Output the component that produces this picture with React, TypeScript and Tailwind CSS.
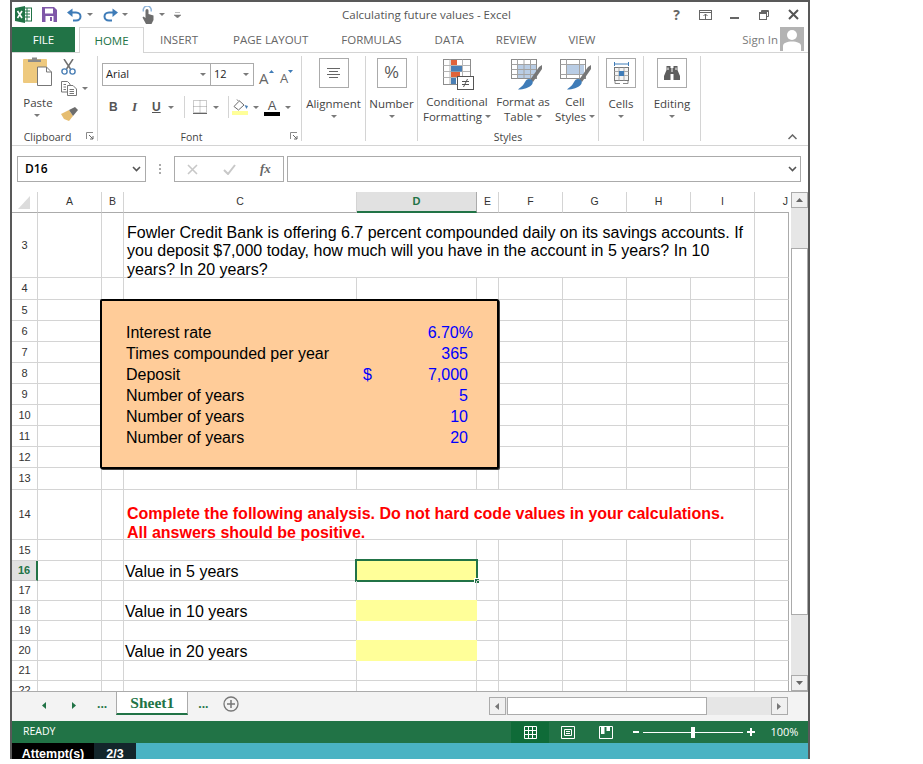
import React from "react";

const ui = "font-['Open_Sans','Noto_Sans',sans-serif]";
const sheet = "font-['Liberation_Sans',Arial,sans-serif]";

function Caret({ className = "" }: { className?: string }) {
  return (
    <svg width="6" height="3" viewBox="0 0 6 3" className={className}>
      <polygon points="0,0 6,0 3,3" fill="#7a7a7a" />
    </svg>
  );
}

function Launcher() {
  return (
    <div className="relative h-0">
      <svg width="8" height="8" viewBox="0 0 8 8" className="absolute right-[3px] -top-[9px]">
        <path d="M0.5 7V0.5H7" fill="none" stroke="#8a8a8a" />
        <path d="M3 3L7 7M7 4V7H4" fill="none" stroke="#666" />
      </svg>
    </div>
  );
}

function GroupLabel({ text, className = "" }: { text?: string; className?: string }) {
  return (
    <div className={`relative mt-auto -mb-[3px] h-[14px] text-center text-[10.5px] leading-[14px] text-[#444] ${ui} ${className}`}>
      {text}
    </div>
  );
}

function ExcelLogo() {
  return (
    <svg width="17" height="17" viewBox="0 0 17 17">
      <rect x="7" y="2" width="9.5" height="13" fill="#fff" stroke="#217346" />
      <path d="M9 5h6M9 8h6M9 11h6M12 2v13" stroke="#217346" />
      <polygon points="0,2 10,0 10,17 0,15" fill="#217346" />
      <path d="M2.5 5L7 12M7 5L2.5 12" stroke="#fff" strokeWidth="1.6" />
    </svg>
  );
}

function SaveIcon() {
  return (
    <svg width="15" height="15" viewBox="0 0 15 15">
      <path d="M0 0H12L15 3V15H0Z" fill="#7f57a8" />
      <rect x="3" y="1.5" width="8" height="5" fill="#fff" />
      <rect x="3.5" y="9" width="8" height="6" fill="#fff" />
      <rect x="8" y="10" width="2" height="4" fill="#7f57a8" />
    </svg>
  );
}

function UndoIcon({ flip }: { flip?: boolean }) {
  return (
    <svg width="15" height="14" viewBox="0 0 15 14" className={flip ? "-scale-x-100" : ""}>
      <path d="M2.5 4.5H9C12 4.5 13.5 6.5 13.5 8.5C13.5 10.5 12 12.5 9 12.5H6" fill="none" stroke="#3f7cb8" strokeWidth="2" />
      <polygon points="5.5,0.5 5.5,9 0,4.5" fill="#3f7cb8" />
    </svg>
  );
}

function TouchIcon() {
  return (
    <svg width="13" height="18" viewBox="0 0 13 18">
      <path d="M1.5 5.5A4 4 0 1 1 9 5.5" fill="none" stroke="#8fb4d9" strokeWidth="1.5" />
      <path d="M3.5 4.5a1.5 1.5 0 0 1 3 0V8l5 1.5V14l-2 4H4L0.5 11.5l1-1L3.5 12Z" fill="#6d6d6d" />
    </svg>
  );
}

function PasteIcon() {
  return (
    <svg width="30" height="30" viewBox="0 0 30 30">
      <rect x="0" y="3" width="24" height="24" rx="1" fill="#eec97e" />
      <path d="M5 6V3.5H9V1.5H14V3.5H18V6Z" fill="#8a8a8a" />
      <path d="M14.5 11H23.5L28.5 16V29.5H14.5Z" fill="#fff" stroke="#777" />
      <path d="M23.5 11V16H28.5" fill="none" stroke="#777" />
    </svg>
  );
}

function ScissorsIcon() {
  return (
    <svg width="15" height="16" viewBox="0 0 15 16">
      <path d="M3 0L9.5 10M12 0L5.5 10" stroke="#6f6f6f" strokeWidth="1.5" />
      <circle cx="3.5" cy="12.5" r="2.6" fill="none" stroke="#4a7fb5" strokeWidth="1.4" />
      <circle cx="11.5" cy="12.5" r="2.6" fill="none" stroke="#4a7fb5" strokeWidth="1.4" />
    </svg>
  );
}

function CopyIcon() {
  return (
    <svg width="16" height="15" viewBox="0 0 16 15">
      <path d="M0.5 0.5H6.5L9 3V11H0.5Z" fill="#fff" stroke="#777" />
      <path d="M6.5 4.5H12L15.5 8V14.5H6.5Z" fill="#fff" stroke="#777" />
      <path d="M8.5 8.5H13M8.5 10.5H13M8.5 12.5H13" stroke="#777" />
      <path d="M2.5 3.5H5M2.5 6H5M2.5 8.5H5" stroke="#777" />
    </svg>
  );
}

function BrushIcon() {
  return (
    <svg width="17" height="14" viewBox="0 0 17 14">
      <polygon points="0,7 8,3 12,9 8,14 3,12" fill="#e6bd70" />
      <polygon points="8,3 14,0 17,3 12,9" fill="#6d6d6d" />
    </svg>
  );
}

function BordersIcon() {
  return (
    <svg width="14" height="14" viewBox="0 0 14 14">
      <rect x="0.5" y="0.5" width="13" height="12" fill="none" stroke="#999" strokeDasharray="1 1" />
      <path d="M7 0.5V13M0.5 6.5H13.5" stroke="#999" strokeDasharray="1 1" />
      <path d="M0 13.5H14" stroke="#666" />
    </svg>
  );
}

function FillIcon() {
  return (
    <svg width="16" height="16" viewBox="0 0 16 16">
      <path d="M5 0.5L6.8 2.5L2 7.5L6.5 11L12 6L7 1.5" fill="#fff" stroke="#6d6d6d" />
      <path d="M12.5 6L16 7L14.5 10Z" fill="#4a7fb5" />
      <rect x="0" y="12" width="16" height="4" fill="#ffff99" />
    </svg>
  );
}

function AlignIcon() {
  return (
    <svg width="15" height="11" viewBox="0 0 15 11">
      <path d="M1 0.5H14M3 3.5H12M1 6.5H14M3 9.5H12" stroke="#666" />
    </svg>
  );
}

function CellsIcon() {
  return (
    <svg width="15" height="23" viewBox="0 0 15 23">
      <path d="M0.5 0V4M14.5 0V4M1 2H14" stroke="#3f7cb8" />
      <rect x="0.5" y="5.5" width="14" height="13" fill="#f4f4f4" stroke="#777" />
      <path d="M5 5.5V18.5M10 5.5V18.5M0.5 9.5H14.5M0.5 13.5H14.5" stroke="#aaa" />
      <rect x="5" y="9" width="5" height="5" fill="#3f7cb8" />
      <path d="M1 19V21.5H6M9 21.5H14V19" fill="none" stroke="#888" />
    </svg>
  );
}

function BinocularsIcon() {
  return (
    <svg width="16" height="14" viewBox="0 0 16 14">
      <path d="M2.5 0H6.5V2H7.5V6H8.5V2H9.5V0H13.5V4L16 10V14H9.5V8H6.5V14H0V10L2.5 4Z" fill="#5d5d5d" />
      <path d="M4 1.5V4M12 1.5V4" stroke="#fff" />
    </svg>
  );
}

function ConditionalIcon() {
  return (
    <svg width="31" height="31" viewBox="0 0 31 31">
      <rect x="0.5" y="0.5" width="27" height="25" fill="#fff" stroke="#8c8c8c" />
      <path d="M7 0.5V25M19.5 0.5V25M0.5 6.5H27M0.5 12.5H27M0.5 18.5H27" stroke="#b5b5b5" />
      <rect x="8" y="1" width="6" height="5" fill="#e0633a" />
      <rect x="8" y="7" width="11" height="5.5" fill="#4a7fb5" />
      <rect x="8" y="13" width="9" height="5" fill="#e0633a" />
      <rect x="8" y="19" width="5" height="6" fill="#4a7fb5" />
      <rect x="14.5" y="17.5" width="16" height="13" fill="#fff" stroke="#555" />
      <path d="M19 22.5H26M19 25.5H26M24.5 20L20.5 28" stroke="#555" />
    </svg>
  );
}

function TableBrushIcon({ cell }: { cell?: boolean }) {
  return (
    <svg width="31" height="31" viewBox="0 0 31 31">
      <rect x="0.5" y="0.5" width="25" height="19" fill="#fff" stroke="#8c8c8c" />
      {cell ? (
        <rect x="6" y="5" width="18" height="10" fill="#b9cde5" />
      ) : (
        <rect x="7" y="6" width="18" height="13" fill="#b9cde5" />
      )}
      {cell ? (
        <path d="M6.5 0.5V19.5M19.5 0.5V19.5M0.5 5.5H25M0.5 15.5H25" stroke="#a3a3a3" />
      ) : (
        <path d="M6.5 0.5V19.5M13 0.5V19.5M19.5 0.5V19.5M0.5 5.5H25M0.5 10.5H25M0.5 15.5H25" stroke="#a3a3a3" />
      )}
      <path d="M19 21L28 8L31 6V10L22 23Z" fill="#777" />
      <path d="M18 20C21 20 23 23 21 25.5C18 29 13 30.5 7 30.5C10 28 12 27 14 23C15 21 16 20 18 20Z" fill="#3f7cb8" />
    </svg>
  );
}

function TabItem({ label, className = "" }: { label: string; className?: string }) {
  return <span className={`text-[11.5px] leading-[25px] text-[#666] ${className}`}>{label}</span>;
}

function BoxButton({ children }: { children: React.ReactNode }) {
  return (
    <div className="flex h-[30px] w-[30px] items-center justify-center border border-[#ababab] bg-white">
      {children}
    </div>
  );
}

function BoxGroup({ label, width, children }: { label: string; width: string; children: React.ReactNode }) {
  return (
    <div className={`flex h-[85px] ${width} flex-col items-center border-r border-[#d4d4d4] pt-[2px] ${ui}`}>
      <BoxButton>{children}</BoxButton>
      <span className="mt-[8px] text-[11.5px] leading-[16px] text-[#444]">{label}</span>
      <Caret className="mt-[3px]" />
    </div>
  );
}

function StyleButton({ width, icon, lines }: { width: string; icon: React.ReactNode; lines: [string, string] }) {
  return (
    <div className={`flex ${width} flex-col items-center`}>
      <div className="h-[31px]">{icon}</div>
      <div className="mt-[4px] text-center text-[11.5px] leading-[15px] whitespace-nowrap text-[#444]">
        {lines[0]}
        <br />
        <span className="inline-flex items-center gap-[3px]">
          {lines[1]}
          <Caret />
        </span>
      </div>
    </div>
  );
}

function TitleBar() {
  return (
    <div className={`flex h-[25px] items-center ${ui}`}>
      <div className="flex w-[330px] items-center pl-[3px]">
        <ExcelLogo />
        <span className="ml-[10px]"><SaveIcon /></span>
        <span className="ml-[10px]"><UndoIcon /></span>
        <Caret className="ml-[5px]" />
        <span className="ml-[10px]"><UndoIcon flip /></span>
        <Caret className="ml-[4px]" />
        <span className="ml-[14px]"><TouchIcon /></span>
        <Caret className="ml-[4px]" />
        <svg width="7" height="6" viewBox="0 0 7 6" className="ml-[9px]">
          <path d="M1 0.5H6M0 3H7L3.5 6Z" fill="#7a7a7a" stroke="#7a7a7a" strokeWidth="0.5" />
        </svg>
      </div>
      <span className="text-[11.5px] text-[#555]">Calculating future values - Excel</span>
      <div className="ml-auto flex items-center">
        <span className="flex w-[29px] justify-center text-[14px] leading-none font-bold text-[#666]">?</span>
        <span className="flex w-[29px] justify-center">
          <svg width="13" height="10" viewBox="0 0 13 10">
            <rect x="0.5" y="0.5" width="12" height="9" fill="none" stroke="#666" />
            <path d="M0.5 2.5H12.5M6.5 9V4M4.5 6L6.5 4L8.5 6" fill="none" stroke="#666" />
          </svg>
        </span>
        <span className="flex w-[29px] justify-center">
          <svg width="9" height="10" viewBox="0 0 9 10"><rect y="7" width="9" height="2" fill="#666" /></svg>
        </span>
        <span className="flex w-[29px] justify-center">
          <svg width="10" height="10" viewBox="0 0 10 10">
            <path d="M2.5 2.5V0.5H9.5V6.5H7.5" fill="none" stroke="#666" />
            <rect x="0.5" y="2.5" width="7" height="7" fill="none" stroke="#666" />
            <path d="M0.5 3.5H7.5M2.5 1.5H9.5" stroke="#666" />
          </svg>
        </span>
        <span className="flex w-[30px] justify-center">
          <svg width="11" height="11" viewBox="0 0 11 11">
            <path d="M1 1L10 10M10 1L1 10" stroke="#555" strokeWidth="2" />
          </svg>
        </span>
      </div>
    </div>
  );
}

function TabRow() {
  return (
    <div className={`relative flex h-[26px] items-start border-b border-[#d4d4d4] ${ui}`}>
      <div className="flex h-[25px] w-[63px] items-center justify-center bg-[#217346] text-[11.5px] text-white">FILE</div>
      <div className="ml-[4px] flex h-[26px] w-[65px] items-center justify-center border-x border-t border-[#d4d4d4] bg-white text-[11.5px] text-[#217346]">
        HOME
      </div>
      <TabItem label="INSERT" className="ml-[16px]" />
      <TabItem label="PAGE LAYOUT" className="ml-[35px]" />
      <TabItem label="FORMULAS" className="ml-[33px]" />
      <TabItem label="DATA" className="ml-[33px]" />
      <TabItem label="REVIEW" className="ml-[32px]" />
      <TabItem label="VIEW" className="ml-[32px]" />
      <div className="ml-auto flex items-start pr-[4px]">
        <span className="mr-[2px] text-[11.5px] leading-[25px] text-[#7a7a7a]">Sign In</span>
        <svg width="24" height="24" viewBox="0 0 24 24">
          <rect width="24" height="24" fill="#b3b3b3" />
          <circle cx="12" cy="8" r="5" fill="#fff" />
          <path d="M3 24V19C3 16 7 14.5 12 14.5C17 14.5 21 16 21 19V24Z" fill="#fff" />
        </svg>
      </div>
    </div>
  );
}

function Ribbon() {
  return (
    <div className={`flex h-[93px] border-b border-[#d4d4d4] pt-[3px] ${ui}`}>
      <div className="flex h-[85px] w-[86px] flex-col border-r border-[#d4d4d4]">
        <div className="flex pl-[11px]">
          <div className="flex w-[30px] flex-col items-center">
            <PasteIcon />
            <span className="mt-[9px] text-[11.5px] leading-[16px] text-[#444]">Paste</span>
            <Caret className="mt-[3px] -ml-[2px]" />
          </div>
          <div className="ml-[8px] flex flex-col">
            <span className="mt-[3px] block h-[16px]"><ScissorsIcon /></span>
            <span className="mt-[6px] flex h-[15px] items-center"><CopyIcon /><Caret className="ml-[5px]" /></span>
            <span className="mt-[11px] block h-[14px]"><BrushIcon /></span>
          </div>
        </div>
        <GroupLabel text="Clipboard" className="mr-[14px]" />
        <Launcher />
      </div>

      <div className="flex h-[85px] w-[204px] flex-col border-r border-[#d4d4d4] pl-[4px]">
        <div className="mt-[7px] flex h-[23px] items-center">
          <div className="flex h-[23px] w-[109px] items-center border border-[#ababab] pl-[3px] text-[11px] text-[#222]">
            Arial
            <Caret className="mr-[4px] ml-auto" />
          </div>
          <div className="-ml-px flex h-[23px] w-[44px] items-center border border-[#ababab] pl-[3px] text-[11px] text-[#222]">
            12
            <Caret className="mr-[4px] ml-auto" />
          </div>
          <span className="relative mt-[6px] ml-[5px] w-[16px] text-[15px] leading-[18px] text-[#666]">
            A
            <svg width="5" height="3" viewBox="0 0 5 3" className="absolute top-[1px] left-[10px]"><polygon points="0,3 5,3 2.5,0" fill="#3f7cb8" /></svg>
          </span>
          <span className="relative mt-[6px] ml-[5px] w-[16px] text-[13px] leading-[18px] text-[#666]">
            A
            <svg width="5" height="3" viewBox="0 0 5 3" className="absolute top-[1px] left-[8px]"><polygon points="0,0 5,0 2.5,3" fill="#3f7cb8" /></svg>
          </span>
        </div>
        <div className="mt-[10px] flex h-[22px] items-center text-[#555]">
          <span className={`ml-[7px] w-[10px] text-[12px] font-bold ${sheet}`}>B</span>
          <span className="ml-[13px] w-[8px] font-['Liberation_Serif',serif] text-[13px] font-bold italic">I</span>
          <span className={`ml-[12px] w-[10px] text-[12px] font-bold underline ${sheet}`}>U</span>
          <Caret className="ml-[6px]" />
          <span className="ml-[10px] h-[22px] w-px bg-[#d4d4d4]" />
          <span className="ml-[8px]"><BordersIcon /></span>
          <Caret className="ml-[6px]" />
          <span className="ml-[9px] h-[22px] w-px bg-[#d4d4d4]" />
          <span className="ml-[3px]"><FillIcon /></span>
          <Caret className="ml-[5px]" />
          <span className="ml-[5px] flex w-[16px] flex-col items-center">
            <span className={`text-[13px] leading-[13px] ${sheet}`}>A</span>
            <span className="h-[4px] w-[16px] bg-black" />
          </span>
          <Caret className="ml-[5px]" />
        </div>
        <GroupLabel text="Font" className="mr-[20px]" />
        <Launcher />
      </div>

      <BoxGroup label="Alignment" width="w-[64px]"><AlignIcon /></BoxGroup>
      <BoxGroup label="Number" width="w-[52px]">
        <span className={`text-[16px] text-[#555] ${sheet}`}>%</span>
      </BoxGroup>

      <div className="flex h-[85px] w-[181px] flex-col border-r border-[#d4d4d4]">
        <div className="flex pt-[3px] pl-[3px]">
          <StyleButton width="w-[72px]" icon={<div className="ml-[3px]"><ConditionalIcon /></div>} lines={["Conditional", "Formatting"]} />
          <StyleButton width="w-[60px]" icon={<div className="ml-[6px]"><TableBrushIcon /></div>} lines={["Format as", "Table"]} />
          <StyleButton width="w-[44px]" icon={<TableBrushIcon cell />} lines={["Cell", "Styles"]} />
        </div>
        <GroupLabel text="Styles" />
      </div>

      <BoxGroup label="Cells" width="w-[45px]"><CellsIcon /></BoxGroup>
      <BoxGroup label="Editing" width="w-[57px]"><BinocularsIcon /></BoxGroup>

      <div className="flex flex-1 items-end justify-end pr-[11px] pb-[5px]">
        <svg width="9" height="6" viewBox="0 0 9 6">
          <path d="M0.5 5L4.5 1L8.5 5" fill="none" stroke="#666" strokeWidth="1.5" />
        </svg>
      </div>
    </div>
  );
}

function FormulaBar() {
  return (
    <div className={`flex h-[46px] items-start pt-[10px] pl-[5px] ${ui}`}>
      <div className="flex h-[26px] w-[129px] items-center justify-between border border-[#ababab] px-[7px] text-[12px] font-semibold text-black">
        D16
        <svg width="9" height="6" viewBox="0 0 9 6" className="-mr-[3px]">
          <path d="M1 1L4.5 4.5L8 1" fill="none" stroke="#555" strokeWidth="1.6" />
        </svg>
      </div>
      <div className="ml-[11px] flex h-[26px] w-[5px] flex-col items-center justify-center gap-[2px]">
        <span className="h-[2px] w-[2px] bg-[#aaa]" />
        <span className="h-[2px] w-[2px] bg-[#aaa]" />
        <span className="h-[2px] w-[2px] bg-[#aaa]" />
      </div>
      <div className="ml-[12px] flex h-[26px] w-[110px] items-center border border-[#ababab] pl-[12px]">
        <svg width="11" height="11" viewBox="0 0 11 11"><path d="M1 1L10 10M10 1L1 10" stroke="#c8c8c8" strokeWidth="1.6" /></svg>
        <svg width="13" height="11" viewBox="0 0 13 11" className="ml-[25px]"><path d="M1 6L5 10L12 1" fill="none" stroke="#c8c8c8" strokeWidth="2" /></svg>
        <span className="ml-[24px] font-['Liberation_Serif',serif] text-[13px] font-bold text-[#666] italic">fx</span>
      </div>
      <div className="ml-[3px] flex h-[26px] w-[514px] items-center justify-end border border-[#ababab] pr-[3px]">
        <svg width="9" height="6" viewBox="0 0 9 6">
          <path d="M1 1L4.5 4.5L8 1" fill="none" stroke="#555" strokeWidth="1.6" />
        </svg>
      </div>
    </div>
  );
}

const columns = ["A", "B", "C", "D", "E", "F", "G", "H", "I", "J"];
const rowNumbers = [3, 4, 5, 6, 7, 8, 9, 10, 11, 12, 13, 14, 15, 16, 17, 18, 19, 20, 21, 22];
const line = "border-r border-b border-[#d4d4d4]";

function Cell({ row, col }: { row: number; col: string }) {
  const yellow = col === "D" && (row === 16 || row === 18 || row === 20);
  const label: Record<number, string> = { 16: "Value in 5 years", 18: "Value in 10 years", 20: "Value in 20 years" };
  return (
    <div className={`relative ${yellow ? "-mt-px -ml-px bg-[#ffff99]" : line}`}>
      {col === "C" && label[row] && (
        <div className="absolute bottom-[-1px] left-[1px] text-[16px] leading-[19px] whitespace-nowrap text-black">{label[row]}</div>
      )}
      {col === "D" && row === 16 && (
        <div className="absolute -top-[1px] -left-[1px] h-[23px] w-[123px] border-2 border-[#217346]">
          <span className="absolute -right-[3px] -bottom-[3px] h-[5px] w-[5px] border-t border-l border-white bg-[#217346]" />
        </div>
      )}
    </div>
  );
}

function SheetGrid() {
  return (
    <div className={`relative h-[499px] w-[777px] overflow-hidden ${sheet}`}>
      <div className="grid grid-cols-[26px_64px_22px_233px_120px_22px_64px_64px_64px_64px_34px] grid-rows-[21px_65px_22px_21px_21px_21px_21px_21px_21px_21px_21px_22px_50px_21px_20px_20px_20px_20px_20px_20px_20px]">
        <div className="flex items-center justify-center border-r border-b border-r-[#d4d4d4] border-b-[#ababab]">
          <svg width="12" height="13" viewBox="0 0 12 13" className="ml-[-1px]"><polygon points="12,0 12,13 0,13" fill="#dcdcdc" /></svg>
        </div>
        {columns.map((c) =>
          c === "D" ? (
            <div key={c} className="flex items-center justify-center border-r border-b-2 border-r-[#ababab] border-b-[#217346] bg-[#e1e1e1] text-[11px] font-bold text-[#217346]">
              {c}
            </div>
          ) : (
            <div key={c} className={`flex items-center border-b border-b-[#ababab] text-[10.5px] text-[#333] ${c === "J" ? "justify-end pr-px" : "justify-center border-r border-r-[#d4d4d4]"}`}>
              {c}
            </div>
          ),
        )}
        {rowNumbers.map((row) => (
          <React.Fragment key={row}>
            {row === 16 ? (
              <div className="flex items-center justify-center border-r-2 border-b border-r-[#217346] border-b-[#c6c6c6] bg-[#e1e1e1] text-[11px] font-bold text-[#217346]">{row}</div>
            ) : (
              <div className={`flex items-center justify-center text-[11px] text-[#333] ${line}`}>{row}</div>
            )}
            <Cell row={row} col="A" />
            <Cell row={row} col="B" />
            {row === 3 ? (
              <div className={`col-span-7 pt-[11px] pl-[3px] text-[16px] leading-[18.4px] text-black ${line}`}>
                <p>
                  Fowler Credit Bank is offering 6.7 percent compounded daily on its savings accounts. If
                  <br />
                  you deposit $7,000 today, how much will you have in the account in 5 years? In 10
                  <br />
                  years? In 20 years?
                </p>
              </div>
            ) : row === 14 ? (
              <div className={`col-span-7 pt-[14px] pl-[3px] text-[16px] leading-[19px] font-bold text-[#ff0000] ${line}`}>
                <p>
                  Complete the following analysis. Do not hard code values in your calculations.
                  <br />
                  All answers should be positive.
                </p>
              </div>
            ) : (
              ["C", "D", "E", "F", "G", "H", "I"].map((c) => <Cell key={c} row={row} col={c} />)
            )}
            <div className="border-r border-b border-r-[#ababab] border-b-[#d4d4d4]" />
          </React.Fragment>
        ))}
      </div>

      <div className="absolute top-[107px] left-[88px] h-[170px] w-[399px] rounded-[2px] border-2 border-black bg-[#ffcc99] pt-[21px] text-[16px] leading-[21px] text-black shadow-[1px_1px_0_#444]">
        {[
          ["Interest rate", "", "6.70%", "mr-[24px]"],
          ["Times compounded per year", "", "365", "mr-[29px]"],
          ["Deposit", "$", "7,000", "mr-[29px]"],
          ["Number of years", "", "5", "mr-[29px]"],
          ["Number of years", "", "10", "mr-[29px]"],
          ["Number of years", "", "20", "mr-[29px]"],
        ].map(([name, sign, value, margin], i) => (
          <div key={i} className="relative flex justify-between pl-[24px]">
            <span>{name}</span>
            {sign && <span className="absolute left-[261px] text-[#0000ff]">{sign}</span>}
            <span className={`text-[#0000ff] ${margin}`}>{value}</span>
          </div>
        ))}
      </div>
    </div>
  );
}

function VScroll() {
  return (
    <div className="ml-[2px] flex h-[499px] w-[17px] flex-col bg-[#e6e6e6]">
      <div className="flex h-[16px] items-center justify-center border border-[#ababab] bg-[#f0f0f0]">
        <svg width="7" height="4" viewBox="0 0 7 4"><polygon points="0,4 7,4 3.5,0" fill="#666" /></svg>
      </div>
      <div className="mt-[40px] h-[367px] border border-[#ababab] bg-white" />
      <div className="mt-auto flex h-[16px] items-center justify-center border border-[#ababab] bg-[#f0f0f0]">
        <svg width="7" height="4" viewBox="0 0 7 4"><polygon points="0,0 7,0 3.5,4" fill="#666" /></svg>
      </div>
    </div>
  );
}

function SheetTabs() {
  return (
    <div className={`flex h-[30px] items-start border-t border-[#ababab] bg-[#f3f3f3] ${ui}`}>
      <svg width="4" height="7" viewBox="0 0 4 7" className="mt-[10px] ml-[30px]"><polygon points="4,0 4,7 0,3.5" fill="#217346" /></svg>
      <svg width="4" height="7" viewBox="0 0 4 7" className="mt-[10px] ml-[26px]"><polygon points="0,0 0,7 4,3.5" fill="#217346" /></svg>
      <span className="mt-[4px] ml-[21px] text-[12px] leading-[16px] font-bold text-[#217346]">...</span>
      <div className="-mt-px ml-[9px] flex h-[24px] w-[72px] items-center justify-center border-x border-t border-b-2 border-x-[#ababab] border-t-[#ababab] border-b-[#217346] bg-white pt-px font-['Liberation_Serif',serif] text-[15.5px] font-bold text-[#217346]">
        Sheet1
      </div>
      <span className="mt-[4px] ml-[10px] text-[12px] leading-[16px] font-bold text-[#217346]">...</span>
      <svg width="16" height="16" viewBox="0 0 16 16" className="mt-[4px] ml-[14px]">
        <circle cx="8" cy="8" r="7" fill="none" stroke="#777" strokeWidth="1.3" />
        <path d="M8 4V12M4 8H12" stroke="#777" strokeWidth="1.5" />
      </svg>
      <div className="mt-[5px] ml-[250px] flex h-[18px] w-[299px] bg-[#e6e6e6]">
        <div className="flex h-[18px] w-[17px] items-center justify-center border border-[#ababab] bg-[#f0f0f0]">
          <svg width="4" height="7" viewBox="0 0 4 7"><polygon points="4,0 4,7 0,3.5" fill="#777" /></svg>
        </div>
        <div className="ml-[1px] h-[18px] w-[200px] border border-[#ababab] bg-white" />
        <div className="ml-auto flex h-[18px] w-[17px] items-center justify-center border border-[#ababab] bg-[#f0f0f0]">
          <svg width="4" height="7" viewBox="0 0 4 7"><polygon points="0,0 0,7 4,3.5" fill="#777" /></svg>
        </div>
      </div>
    </div>
  );
}

function StatusBar() {
  return (
    <div className={`flex h-[22px] items-center bg-[#217346] text-white ${ui}`}>
      <span className="ml-[11px] text-[10.5px]">READY</span>
      <div className="ml-[456px] flex h-[21px] w-[38px] items-center justify-center bg-[#0f6b38]">
        <svg width="13" height="13" viewBox="0 0 13 13">
          <path d="M0.5 0.5H12.5V12.5H0.5ZM4.5 0.5V12.5M8.5 0.5V12.5M0.5 4.5H12.5M0.5 8.5H12.5" fill="none" stroke="#fff" />
        </svg>
      </div>
      <svg width="14" height="13" viewBox="0 0 14 13" className="ml-[12px]">
        <path d="M0.5 0.5H13.5V12.5H0.5Z" fill="none" stroke="#fff" />
        <path d="M3.5 3.5H10.5V9.5H3.5ZM5 5.5H9M5 7.5H9" fill="none" stroke="#fff" />
      </svg>
      <svg width="14" height="13" viewBox="0 0 14 13" className="ml-[24px]">
        <path d="M0.5 0.5H13.5V12.5H0.5Z" fill="none" stroke="#fff" />
        <path d="M2 1H5.5V8H2ZM7.5 1H11V5H7.5Z" fill="#fff" />
      </svg>
      <span className="ml-[20px] h-[2px] w-[6px] bg-white" />
      <div className="relative ml-[4px] flex h-[13px] w-[100px] items-center">
        <span className="h-px w-full bg-white" />
        <span className="absolute top-px left-[48px] h-[11px] w-[4px] bg-white" />
      </div>
      <svg width="8" height="8" viewBox="0 0 8 8" className="ml-[4px]">
        <path d="M4 0V8M0 4H8" stroke="#fff" strokeWidth="2" />
      </svg>
      <span className="ml-[15px] text-[11px]">100%</span>
    </div>
  );
}

export default function App() {
  return (
    <div className="h-[764px] w-[923px] overflow-hidden bg-white">
      <div className="ml-[10px] flex h-[759px] w-[800px] flex-col overflow-hidden border-x-2 border-t-2 border-[#595959]">
        <TitleBar />
        <TabRow />
        <Ribbon />
        <FormulaBar />
        <div className="flex">
          <SheetGrid />
          <VScroll />
        </div>
        <SheetTabs />
        <StatusBar />
        <div className={`flex h-[16px] items-start text-[12.5px] leading-[22px] font-bold text-white ${sheet}`}>
          <span className="flex w-[82px] justify-center bg-black">Attempt(s)</span>
          <span className="flex w-[42px] justify-center bg-[#13262b]">2/3</span>
          <span className="h-[20px] flex-1 bg-[#4ab3c3]" />
        </div>
      </div>
    </div>
  );
}
